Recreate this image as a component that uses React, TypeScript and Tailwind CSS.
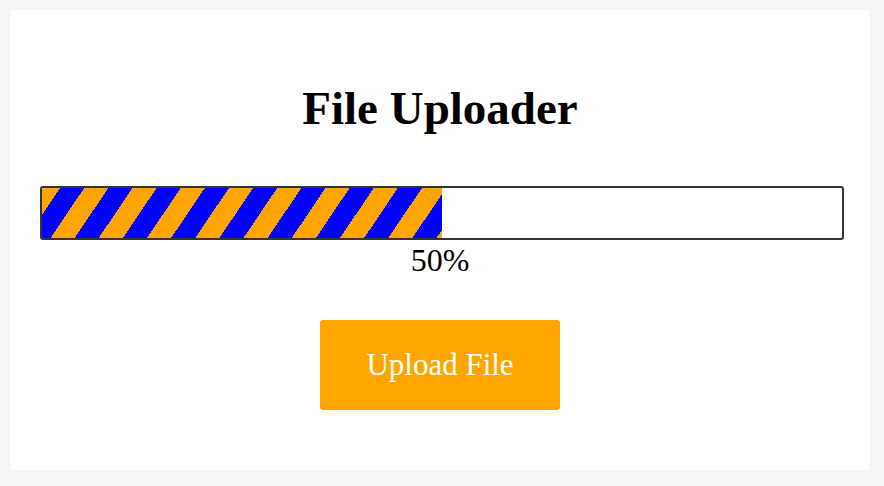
export default function App() {
  const progress = 50;

  return (
    <div className="min-h-[486px] bg-[#f5f5f5] p-[10px] font-['Liberation_Serif',serif]">
      <div className="flex h-[460px] w-[860px] flex-col items-center bg-white px-[30px] pt-[72px]">
        <h1 className="text-[47px] font-bold leading-[52px] text-black">File Uploader</h1>

        <div className="mt-[52px] h-[54px] w-[804px] shrink-0 self-start overflow-hidden rounded-[3px] border-2 border-[#333]">
          <div
            className="h-full bg-[repeating-linear-gradient(124deg,#ffa500_0_15px,#0000ff_15px_35px,#ffa500_35px_40px)]"
            style={{ width: `${progress}%` }}
          />
        </div>
        <p className="text-[32px] leading-[40px] text-black">{progress}%</p>

        <button className="mt-[40px] h-[90px] w-[240px] rounded-[3px] bg-[#ffa500] text-[31px] text-white">
          Upload File
        </button>
      </div>
    </div>
  );
}
